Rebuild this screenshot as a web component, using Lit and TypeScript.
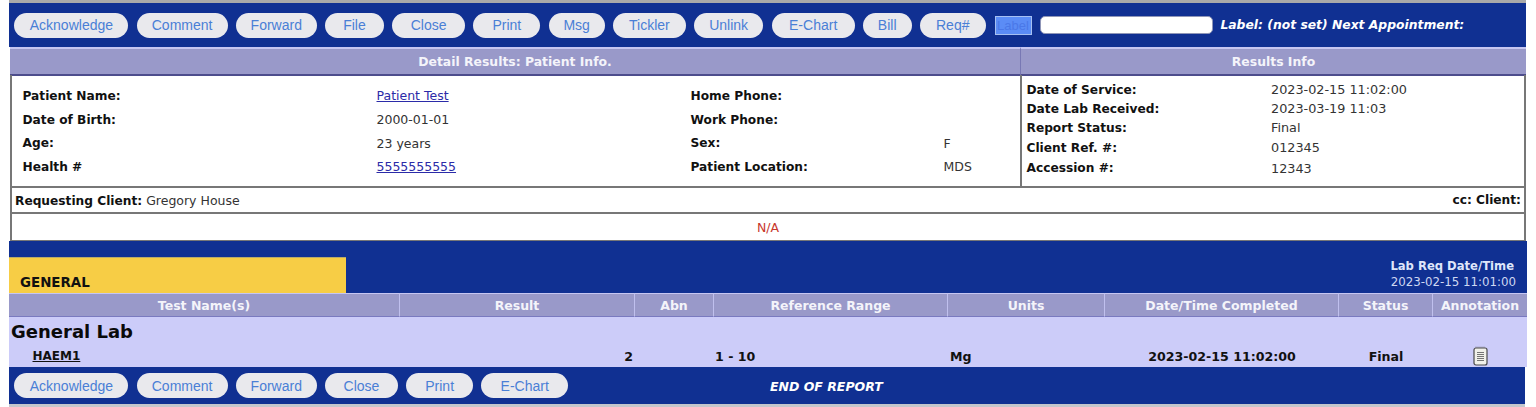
import { LitElement, html, css } from "lit";
import { customElement } from "lit/decorators.js";

const topButtons: [string, number][] = [["Acknowledge",114],["Comment",91],["Forward",81],["File",59],["Close",73],["Print",67],["Msg",56.3],["Tickler",72.7],["Unlink",69.6],["E-Chart",83],["Bill",48.7],["Req#",66]];
const bottomButtons: [string, number][] = [["Acknowledge",114],["Comment",91],["Forward",81],["Close",73],["Print",67],["E-Chart",86.7]];
const columns = ["Test Name(s)","Result","Abn","Reference Range","Units","Date/Time Completed","Status","Annotation"];

@customElement("app-root")
export class AppRoot extends LitElement {
  static styles = css`
    :host { display: block; width: 1536px; height: 407px; overflow: hidden; background: #fff;
      font-family: "DejaVu Sans", Verdana, sans-serif; font-size: 12.5px; color: #333; }
    * { box-sizing: border-box; }
    .page { margin-left: 9px; width: 1518px; height: 407px; display: flex; flex-direction: column; }
    .strip { height: 3px; background: #a9a9a9; flex: none; margin-right: 1px; }
    .strip.end { background: #c4c6cc; margin-right: 2px; }
    .bar { background: #103092; display: flex; align-items: center; flex: none; margin-right: 1px; padding-left: 5.4px; }
    .bar.top { height: 44px; }
    .bar.bottom { height: 37px; position: relative; margin-right: 2px; }
    .buttons { display: flex; gap: 8.2px; }
    button { height: 25px; border: 0; border-radius: 13px; background: #e9e9ed; color: #4a7fd6; padding: 0;
      font: 14px "Liberation Sans", Arial, sans-serif; }
    .label-btn { width: 37px; height: 19px; margin-left: 8.8px; padding: 0; background: #5b8cf6; color: #4a78e8;
      border: 1.5px solid #a6c0f2; border-radius: 0; font-size: 13px; }
    .label-input { width: 173.5px; height: 18px; margin-left: 8.4px; border: 1px solid #8f96b8; border-radius: 5px; background: #fff; }
    .note { margin-left: 7px; color: #fff; font-weight: bold; font-style: italic; font-size: 12.35px; }
    .end-report { position: absolute; left: 761px; top: 11.5px; color: #fff; font-weight: bold; font-style: italic; font-size: 12.5px; }
    .heads { display: grid; grid-template-columns: 1010px 506px; height: 28px; padding-left: 1px; flex: none; background: #fff; }
    .heads div { background: #9999c9; color: #f4f4fa; font-weight: bold; font-size: 12.4px; text-align: center;
      border-top: 2px solid #c6c6f2; border-bottom: 2px solid #4d4d8c; line-height: 25px; }
    .heads div + div { border-left: 1px solid #7878b4; }
    .info { display: grid; grid-template-columns: 1011px 505px; height: 113px; flex: none; padding-left: 1px; }
    .patient, .results, .row { border: 1px solid #777; border-top: 0; }
    .patient { border-left-width: 2px; padding: 9px 0 0 10.5px; display: grid;
      grid-template-columns: 354px 314px 253px 1fr; grid-auto-rows: 23.7px; align-items: center; border-bottom-width: 2px; }
    .results { border-right-width: 2px; padding: 5px 0 0 4.5px; display: grid;
      grid-template-columns: 244.5px 1fr; grid-template-rows: 19px 19px 19px 21px 20px; align-items: center; border-bottom-width: 2px; }
    .results span { font-size: 12.8px; }
    b { color: #111; font-size: 12.2px; }
    a { color: #2b2ba8; text-decoration: underline; }
    .row { height: 26px; flex: none; margin: 0 1px; border-left-width: 2px; border-right-width: 2px; border-bottom-width: 2px;
      display: flex; justify-content: space-between; align-items: center; padding: 0 3px 0 3px; }
    .row.na { height: 27px; color: #c8382c; justify-content: center; border-bottom-width: 1px; }
    .section { height: 52px; background: #103092; flex: none; display: flex; justify-content: space-between; align-items: flex-end; }
    .tab { width: 337px; height: 36px; background: #f7cd45; border-top: 1px solid #b9ab6a; color: #111; font-weight: bold;
      font-size: 13.4px; padding: 16px 0 0 11px; line-height: 18px; }
    .req { color: #cfd8f2; font-size: 11.8px; text-align: right; padding: 0 11px 3.5px 0; line-height: 16px; }
    .req b { color: #dfe6fa; display: block; font-size: 11.6px; padding-right: 2px; }
    .table { flex: none; display: grid; grid-template-columns: 391px 235px 79px 234px 157px 234px 94px 94px; background: #ccccf9; color: #111; }
    .th { height: 24px; background: #9999c9; color: #f4f4fa; font-weight: bold; text-align: center; line-height: 23px;
      border-top: 1px solid #c6c6f2; border-bottom: 1px solid #7a7ac0; border-right: 1.5px solid #c0c0ee; }
    .th:nth-child(8) { border-right: 0; }
    .group { grid-column: 1 / -1; height: 29px; font-size: 18px; font-weight: bold; line-height: 29px; padding-left: 2px; color: #0a0a0a; }
    .cell { height: 21px; line-height: 21px; font-weight: bold; font-size: 12.6px; }
    .name { padding-left: 23.5px; font-size: 12px; }
    .name span { text-decoration: underline; }
    .result { text-align: right; padding-right: 2px; }
    .ref { padding-left: 1px; }
    .units { padding-left: 2px; }
    .done, .status { text-align: center; }
    .icon svg { display: block; margin: 0 0 0 40px; }
  `;

  private buttons(list: [string, number][]) {
    return html`<div class="buttons">${list.map(([t, w]) => html`<button style="width:${w}px">${t}</button>`)}</div>`;
  }

  render() {
    return html`<div class="page">
      <div class="strip"></div>
      <div class="bar top">
        ${this.buttons(topButtons)}
        <button class="label-btn">Label</button>
        <div class="label-input"></div>
        <span class="note">Label: (not set) Next Appointment:</span>
      </div>
      <div class="heads"><div>Detail Results: Patient Info.</div><div>Results Info</div></div>
      <div class="info">
        <div class="patient">
          <b>Patient Name:</b><span><a>Patient Test</a></span><b>Home Phone:</b><span></span>
          <b>Date of Birth:</b><span>2000-01-01</span><b>Work Phone:</b><span></span>
          <b>Age:</b><span>23 years</span><b>Sex:</b><span>F</span>
          <b>Health #</b><span><a>5555555555</a></span><b>Patient Location:</b><span>MDS</span>
        </div>
        <div class="results">
          <b>Date of Service:</b><span>2023-02-15 11:02:00</span>
          <b>Date Lab Received:</b><span>2023-03-19 11:03</span>
          <b>Report Status:</b><span>Final</span>
          <b>Client Ref. #:</b><span>012345</span>
          <b>Accession #:</b><span>12343</span>
        </div>
      </div>
      <div class="row"><span><b>Requesting Client:</b> Gregory House</span><b>cc: Client:</b></div>
      <div class="row na">N/A</div>
      <div class="section">
        <div class="tab">GENERAL</div>
        <div class="req"><b>Lab Req Date/Time</b>2023-02-15 11:01:00</div>
      </div>
      <div class="table">
        ${columns.map((c) => html`<div class="th">${c}</div>`)}
        <div class="group">General Lab</div>
        <div class="cell name"><span>HAEM1</span></div>
        <div class="cell result">2</div>
        <div class="cell"></div>
        <div class="cell ref">1 - 10</div>
        <div class="cell units">Mg</div>
        <div class="cell done">2023-02-15 11:02:00</div>
        <div class="cell status">Final</div>
        <div class="cell icon">
          <svg width="15" height="20" viewBox="0 0 15 20">
            <rect x="1" y="2" width="13" height="17" rx="2" fill="#f1f1ea" stroke="#4a4a4a" stroke-width="1.2"/>
            <path d="M2.5 1.2h10" stroke="#777" stroke-width="1" stroke-dasharray="1 1"/>
            <path d="M4 6.5h7M4 8.5h7M4 10.5h7M4 12.5h7M4 14.5h7" stroke="#666" stroke-width=".9"/>
          </svg>
        </div>
      </div>
      <div class="bar bottom">
        ${this.buttons(bottomButtons)}
        <span class="end-report">END OF REPORT</span>
      </div>
      <div class="strip end"></div>
    </div>`;
  }
}
